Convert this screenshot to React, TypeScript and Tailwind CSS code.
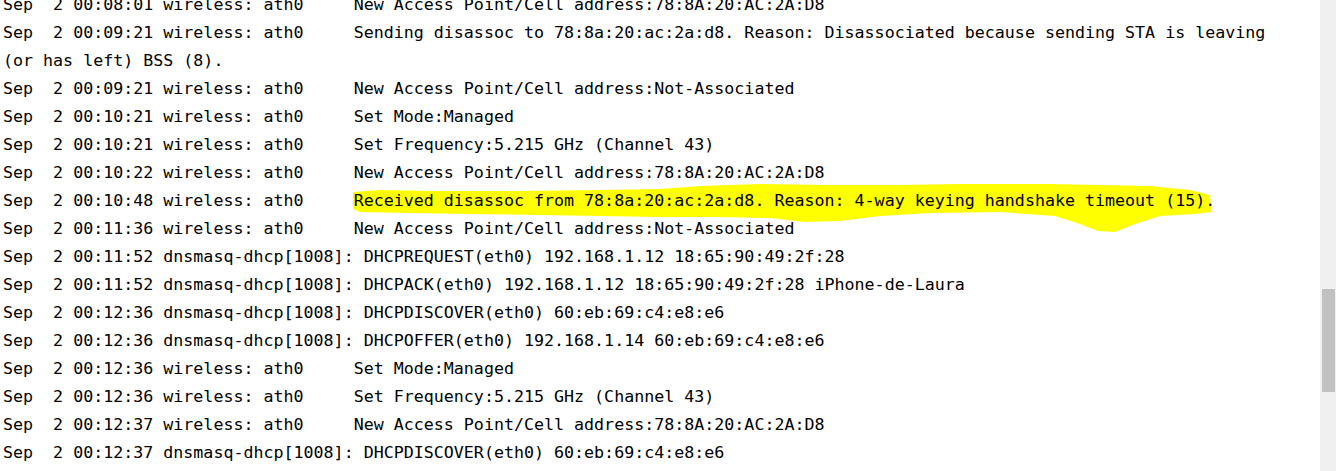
const lines = [
  "Sep  2 00:08:01 wireless: ath0     New Access Point/Cell address:78:8A:20:AC:2A:D8",
  "Sep  2 00:09:21 wireless: ath0     Sending disassoc to 78:8a:20:ac:2a:d8. Reason: Disassociated because sending STA is leaving",
  "(or has left) BSS (8).",
  "Sep  2 00:09:21 wireless: ath0     New Access Point/Cell address:Not-Associated",
  "Sep  2 00:10:21 wireless: ath0     Set Mode:Managed",
  "Sep  2 00:10:21 wireless: ath0     Set Frequency:5.215 GHz (Channel 43)",
  "Sep  2 00:10:22 wireless: ath0     New Access Point/Cell address:78:8A:20:AC:2A:D8",
  "Sep  2 00:10:48 wireless: ath0     Received disassoc from 78:8a:20:ac:2a:d8. Reason: 4-way keying handshake timeout (15).",
  "Sep  2 00:11:36 wireless: ath0     New Access Point/Cell address:Not-Associated",
  "Sep  2 00:11:52 dnsmasq-dhcp[1008]: DHCPREQUEST(eth0) 192.168.1.12 18:65:90:49:2f:28",
  "Sep  2 00:11:52 dnsmasq-dhcp[1008]: DHCPACK(eth0) 192.168.1.12 18:65:90:49:2f:28 iPhone-de-Laura",
  "Sep  2 00:12:36 dnsmasq-dhcp[1008]: DHCPDISCOVER(eth0) 60:eb:69:c4:e8:e6",
  "Sep  2 00:12:36 dnsmasq-dhcp[1008]: DHCPOFFER(eth0) 192.168.1.14 60:eb:69:c4:e8:e6",
  "Sep  2 00:12:36 wireless: ath0     Set Mode:Managed",
  "Sep  2 00:12:36 wireless: ath0     Set Frequency:5.215 GHz (Channel 43)",
  "Sep  2 00:12:37 wireless: ath0     New Access Point/Cell address:78:8A:20:AC:2A:D8",
  "Sep  2 00:12:37 dnsmasq-dhcp[1008]: DHCPDISCOVER(eth0) 60:eb:69:c4:e8:e6",
];

// hand-drawn marker stroke over the timeout line
function Highlight() {
  return (
    <svg
      className="absolute top-0 left-0 pointer-events-none"
      width="1320"
      height="471"
      viewBox="0 0 1320 471"
    >
      <path
        d="M353,192 L380,190 L430,191 L520,191 L600,190 L660,189 L700,186 L760,184 L830,185 L900,185 L960,184 L1050,184 L1150,186 L1190,190 L1210,195 L1211,212 L1195,214 L1160,216 L1135,224 L1115,232 L1098,231 L1080,224 L1055,216 L1000,212 L930,213 L880,216 L840,221 L805,222 L770,218 L720,217 L660,217 L600,216 L540,215 L470,214 L410,213 L360,212 L353,209 Z"
        fill="#ffff00"
      />
    </svg>
  );
}

export default function App() {
  return (
    <div className="flex h-[471px] w-[1336px] bg-white overflow-hidden">
      <div className="relative flex-1 overflow-hidden">
        <Highlight />
        <div
          className="relative -mt-[9px] pl-[3px] text-black leading-[28px] text-[16.65px]"
          style={{ fontFamily: '"DejaVu Sans Mono", "Liberation Mono", monospace' }}
        >
          {lines.map((l, i) => (
            <div key={i} className="whitespace-pre">
              {l}
            </div>
          ))}
        </div>
      </div>
      <div className="w-4 bg-[#f0f0f0] pt-[289px] pl-[2px]">
        <div className="w-[13px] h-[103px] bg-[#c1c1c1]" />
      </div>
    </div>
  );
}
